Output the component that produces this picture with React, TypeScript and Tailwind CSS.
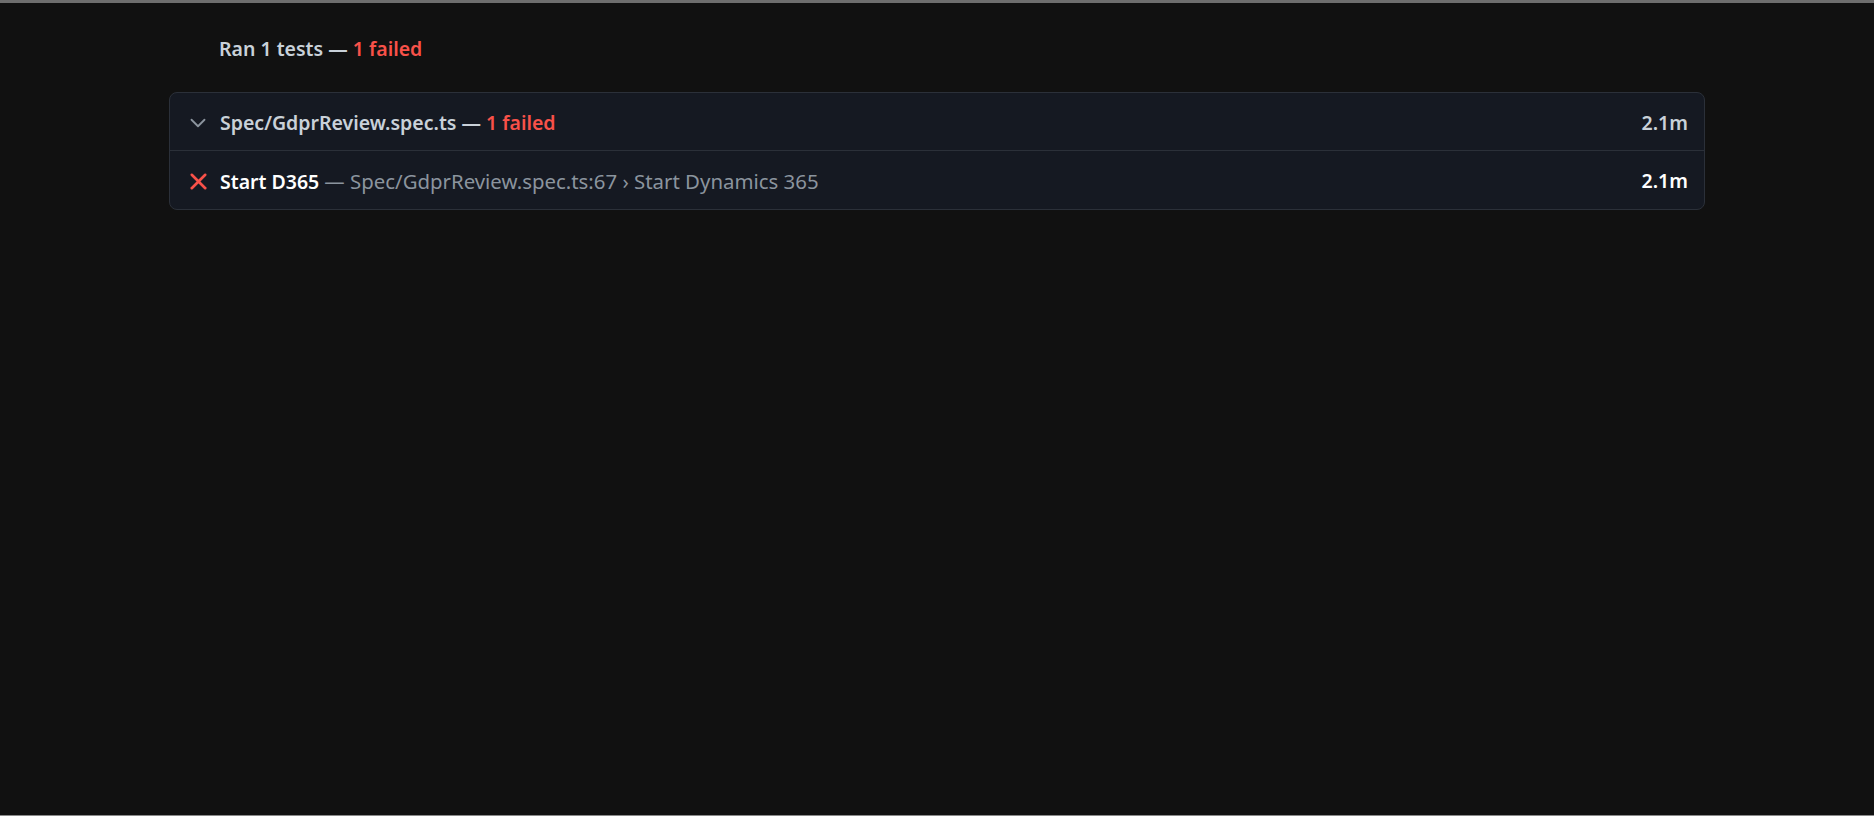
import { ChevronDown, X } from "lucide-react";

export default function App() {
    return (
        <div
            className="min-h-screen h-[816px] bg-[#111111] border-t-[3px] border-t-[#6e6e6e] border-b border-b-[#8a8a8a] text-[19.5px]"
            style={{ fontFamily: '"Noto Sans", "Open Sans", sans-serif' }}
        >
            <div className="w-[1536px] mx-auto">
                {/* Summary */}
                <div className="mt-[32px] mb-[29px] pl-[50px] h-[28px] leading-[28px] font-semibold text-[#c9d1d9]">
                    Ran 1 tests — <span className="text-[#f85149]">1 failed</span>
                </div>

                {/* Spec file card */}
                <div className="rounded-[8px] border border-[#2b3039] bg-[#151922] overflow-hidden">
                    <div className="h-[58px] flex items-center pt-[2px] pl-[15px] pr-[16px] border-b border-[#2b3039]">
                        <ChevronDown className="w-[26px] h-[26px] text-[#8b949e] mr-[9px] shrink-0" strokeWidth={1.7} />
                        <div className="flex-1 font-semibold text-[#c9d1d9]">
                            Spec/GdprReview.spec.ts — <span className="text-[#f85149]">1 failed</span>
                        </div>
                        <div className="font-semibold text-[#c9d1d9]">2.1m</div>
                    </div>
                    <div className="h-[58px] flex items-center pt-[2px] pl-[15px] pr-[16px]">
                        <X className="w-[27px] h-[27px] text-[#f85149] mr-[8px] shrink-0" strokeWidth={2.3} />
                        <div className="flex-1">
                            <span className="font-semibold text-white">Start D365</span>{" "}
                            <span className="text-[#8b949e] text-[20.4px]">— Spec/GdprReview.spec.ts:67 › Start Dynamics 365</span>
                        </div>
                        <div className="font-semibold text-white">2.1m</div>
                    </div>
                </div>
            </div>
        </div>
    );
}
